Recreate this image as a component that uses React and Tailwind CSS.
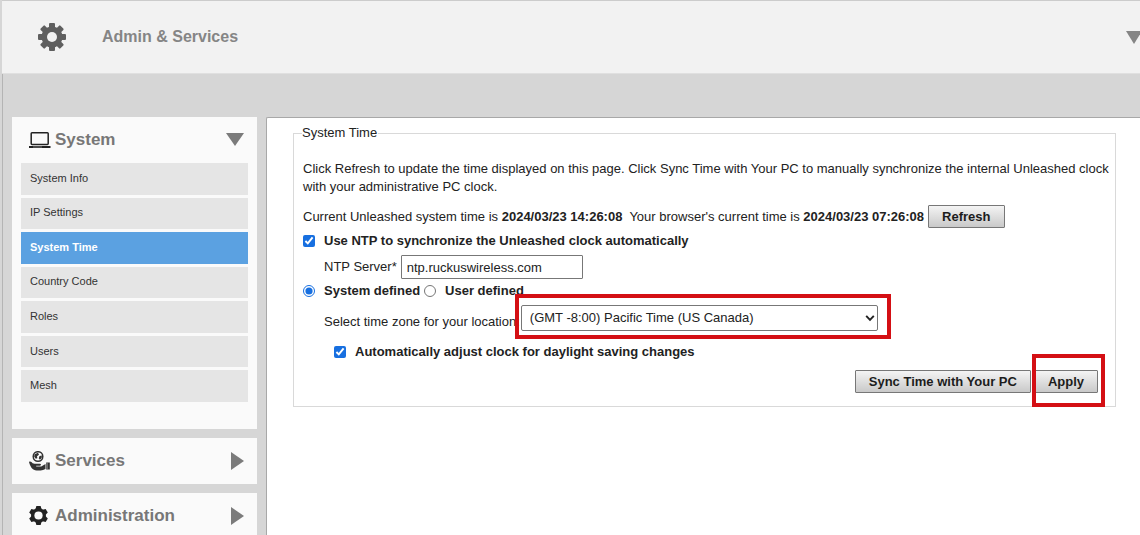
import { clsx } from 'clsx';

const systemLinks = ['System Info', 'IP Settings', 'System Time', 'Country Code', 'Roles', 'Users', 'Mesh'];

function HeaderGear() {
  return (
    <svg width="28" height="28" viewBox="-14 -14 28 28" fill="#5f5f5f" aria-hidden="true">
      {[0, 45, 90, 135].map((angle) => (
        <rect key={angle} x="-3" y="-14" width="6" height="28" rx="1" transform={`rotate(${angle})`} />
      ))}
      <circle r="10.5" />
      <circle r="5" fill="#f2f2f2" />
    </svg>
  );
}

function LaptopIcon() {
  return (
    <svg width="22" height="18" viewBox="0 0 22 18" fill="none" aria-hidden="true">
      <rect x="2.2" y="1.8" width="17" height="11.6" rx="0.8" stroke="#222" strokeWidth="1.5" />
      <path d="M0 16h21.500" stroke="#222" strokeWidth="2" />
      <path d="M4 16h9" stroke="#777" strokeWidth="1" />
    </svg>
  );
}

function ServicesIcon() {
  return (
    <svg width="22" height="20" viewBox="0 0 22 20" aria-hidden="true">
      <circle cx="9" cy="5.5" r="4.800" fill="#fff" stroke="#333" strokeWidth="1.5" />
      <path d="M5.5 3.2 9 1.8l1 2-2 1.400.4 2-1.600.6-1.600-2zM10.500 5l2.400-.6-.2 2.600-1.800 1.800-1.200-1.600z" fill="#333" />
      <path d="M0 11c1.200-1 2.600.1 3.600 1.200l2 .6h5.200c1.600.1 1.600 1.700.2 1.900H7.200v.7h5l4.300-2.400v5l-2.500 1c-3.700.8-8.200.8-10-.7C2 17 .6 13.500 0 11z" fill="#333" />
      <path d="M17.200 11.500h3.600v7h-3.600z" fill="#333" />
      <path d="M18.200 11.500v7" stroke="#aaa" strokeWidth="0.7" />
    </svg>
  );
}

function AdminGear() {
  return (
    <svg width="19" height="19" viewBox="-9 -9 18 18" fill="#222" aria-hidden="true">
      {[0, 60, 120].map((angle) => (
        <path key={angle} d="M-2-9H2L3.200-5V5L2 9H-2L-3.200 5V-5z" transform={`rotate(${angle})`} />
      ))}
      <circle r="7" />
      <circle r="3.900" fill="#fafafa" />
    </svg>
  );
}

function Arrow({ open }) {
  return open ? (
    <svg width="18" height="13" viewBox="0 0 18 13" aria-hidden="true">
      <path d="M0 0h18L9 13z" fill="#7b7b7b" />
    </svg>
  ) : (
    <svg width="13" height="18" viewBox="0 0 13 18" aria-hidden="true">
      <path d="M0 0v18l13-9z" fill="#7b7b7b" />
    </svg>
  );
}

function Section({ icon, title, open = false, children }) {
  return (
    <section className="bg-[#fafafa]">
      <button type="button" aria-expanded={open} className="flex h-[46px] w-full items-center pr-[13px] pb-[1px] pl-[17px] text-left">
        <span className="flex w-[26px] items-center">{icon}</span>
        <span className="flex-1 text-[17px] font-bold text-[#777]">{title}</span>
        <Arrow open={open} />
      </button>
      {children}
    </section>
  );
}

function PushButton({ children }) {
  return (
    <button type="button" className="h-[23px] rounded-[1px] border border-[#777] bg-linear-to-b from-[#f4f4f4] to-[#c9c9c9] px-[13px] text-[13px] font-bold text-[#1c1c1c]">
      {children}
    </button>
  );
}

export default function App() {
  return (
    <div className="flex h-screen flex-col overflow-hidden bg-[#d6d6d6] font-['Liberation_Sans',Arial,sans-serif] text-[13px] leading-[18px] text-[#222]">
      <header className="ml-[2px] flex h-[74px] shrink-0 items-center border-t border-b border-t-[#ccc] border-b-[#e0e0e0] bg-[#f2f2f2] pl-[36px]">
        <HeaderGear />
        <h1 className="ml-[36px] flex-1 text-[16px] font-bold text-[#858585]">Admin &amp; Services</h1>
        <button type="button" aria-label="Expand header" className="-mr-[2px]">
          <svg width="16" height="13" viewBox="0 0 16 13" aria-hidden="true">
            <path d="M0 0h16L8 13z" fill="#858585" />
          </svg>
        </button>
      </header>

      <div className="ml-[2px] flex min-h-0 flex-1 border-l border-[#b4b4b4]">
        <nav className="mt-[43px] ml-[9px] flex w-[245px] shrink-0 flex-col gap-[9px]">
          <Section icon={<LaptopIcon />} title="System" open>
            <ul className="grid min-h-[239px] auto-rows-fr gap-[3px] px-[9px]">
              {systemLinks.map((label) => {
                const active = label === 'System Time';
                return (
                  <li key={label} className={clsx('flex', active ? 'bg-[#5ba1e1]' : 'bg-[#e5e5e5]')}>
                    <a href="#" className={clsx('flex flex-1 items-center pb-[2px] pl-[9px] text-[11px]', active ? 'font-bold text-white' : 'text-[#333]')}>
                      {label}
                    </a>
                  </li>
                );
              })}
            </ul>
            <div className="h-[27px]" />
          </Section>
          <Section icon={<ServicesIcon />} title="Services" />
          <Section icon={<AdminGear />} title="Administration" />
        </nav>

        <main className="mt-[43px] ml-[9px] min-w-0 flex-1 rounded-tl-[2px] border-t border-l border-[#a8a8a8] bg-white pt-[6px] pr-[24px] pl-[26px]">
          <fieldset className="min-w-0 border border-[#d9d9d9] pb-[13px] pl-[9px]">
            <legend className="-ml-[1px] pr-[1px]">System Time</legend>
            <p className="mt-[18px]">
              Click Refresh to update the time displayed on this page. Click Sync Time with Your PC to manually synchronize the internal Unleashed clock with your administrative PC clock.
            </p>
            <div className="mt-[9px] flex items-center gap-[4px]">
              <span className="whitespace-nowrap">
                Current Unleashed system time is <b>2024/03/23 14:26:08</b>&nbsp; Your browser's current time is <b>2024/03/23 07:26:08</b>
              </span>
              <PushButton>Refresh</PushButton>
            </div>
            <label className="mt-[4px] flex items-center gap-[9px] font-bold">
              <input type="checkbox" defaultChecked className="size-[12px] accent-[#176fe0]" />
              Use NTP to synchronize the Unleashed clock automatically
            </label>
            <div className="mt-[5px] flex items-center gap-[4px] pl-[21px]">
              <label htmlFor="ntp">NTP Server*</label>
              <input id="ntp" type="text" defaultValue="ntp.ruckuswireless.com" className="h-[24px] w-[182px] rounded-[1px] border border-[#777] px-[5px]" />
            </div>
            <div className="mt-[3px] flex items-center gap-[4px] font-bold">
              <label className="flex items-center gap-[9px]">
                <input type="radio" name="zone" defaultChecked className="size-[12px] accent-[#176fe0]" />
                System defined
              </label>
              <label className="flex items-center gap-[9px]">
                <input type="radio" name="zone" className="size-[12px]" />
                User defined
              </label>
            </div>
            <div className="mt-[5px] flex items-end gap-[1px] pl-[21px]">
              <label htmlFor="timezone" className="whitespace-nowrap">Select time zone for your location:</label>
              <div className="relative">
                <select id="timezone" className="block h-[26px] w-[357px] appearance-none rounded-[2px] border border-[#777] bg-white px-[8px]">
                  <option>(GMT -8:00) Pacific Time (US Canada)</option>
                </select>
                <svg className="pointer-events-none absolute top-[9px] right-[3px]" width="10" height="8" viewBox="0 0 10 8" fill="none" aria-hidden="true">
                  <path d="M1.200 1.800 5 5.800l3.800-4" stroke="#222" strokeWidth="1.900" />
                </svg>
                <div className="pointer-events-none absolute -top-[11px] -right-[13px] -bottom-[8px] -left-[6px] border-4 border-[#d40f14]" />
              </div>
            </div>
            <label className="mt-[12px] ml-[31px] flex items-center gap-[9px] font-bold">
              <input type="checkbox" defaultChecked className="size-[12px] accent-[#176fe0]" />
              Automatically adjust clock for daylight saving changes
            </label>
            <div className="mt-[9px] flex justify-end gap-[3px] pr-[17px]">
              <PushButton>Sync Time with Your PC</PushButton>
              <div className="relative flex">
                <PushButton>Apply</PushButton>
                <div className="pointer-events-none absolute -top-[16px] -right-[7px] -bottom-[14px] -left-[2px] border-4 border-[#d40f14]" />
              </div>
            </div>
          </fieldset>
        </main>
      </div>
    </div>
  );
}
